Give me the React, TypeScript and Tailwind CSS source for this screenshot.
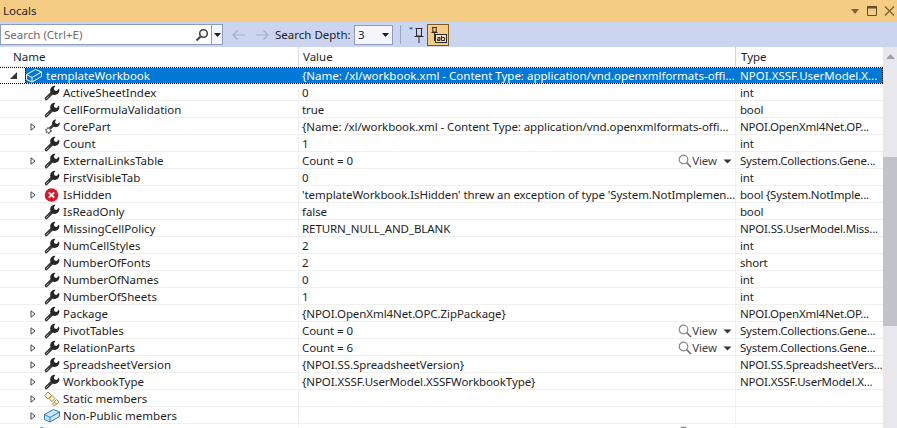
import React from 'react';

type Row = {
  name: string;
  value?: string;
  type?: string;
  icon?: 'wrench' | 'gear' | 'error' | 'static' | 'box';
  expand?: boolean;
  view?: boolean;
};

const rows: Row[] = [
  { name: 'ActiveSheetIndex', value: '0', type: 'int' },
  { name: 'CellFormulaValidation', value: 'true', type: 'bool' },
  { name: 'CorePart', value: '{Name: /xl/workbook.xml - Content Type: application/vnd.openxmlformats-offi...', type: 'NPOI.OpenXml4Net.OP...', icon: 'gear', expand: true },
  { name: 'Count', value: '1', type: 'int' },
  { name: 'ExternalLinksTable', value: 'Count = 0', type: 'System.Collections.Gene...', expand: true, view: true },
  { name: 'FirstVisibleTab', value: '0', type: 'int' },
  { name: 'IsHidden', value: "'templateWorkbook.IsHidden' threw an exception of type 'System.NotImplemen...", type: 'bool {System.NotImple...', icon: 'error', expand: true },
  { name: 'IsReadOnly', value: 'false', type: 'bool' },
  { name: 'MissingCellPolicy', value: 'RETURN_NULL_AND_BLANK', type: 'NPOI.SS.UserModel.Miss...' },
  { name: 'NumCellStyles', value: '2', type: 'int' },
  { name: 'NumberOfFonts', value: '2', type: 'short' },
  { name: 'NumberOfNames', value: '0', type: 'int' },
  { name: 'NumberOfSheets', value: '1', type: 'int' },
  { name: 'Package', value: '{NPOI.OpenXml4Net.OPC.ZipPackage}', type: 'NPOI.OpenXml4Net.OP...', expand: true },
  { name: 'PivotTables', value: 'Count = 0', type: 'System.Collections.Gene...', expand: true, view: true },
  { name: 'RelationParts', value: 'Count = 6', type: 'System.Collections.Gene...', expand: true, view: true },
  { name: 'SpreadsheetVersion', value: '{NPOI.SS.SpreadsheetVersion}', type: 'NPOI.SS.SpreadsheetVers...', expand: true },
  { name: 'WorkbookType', value: '{NPOI.XSSF.UserModel.XSSFWorkbookType}', type: 'NPOI.XSSF.UserModel.X...', expand: true },
  { name: 'Static members', icon: 'static', expand: true },
  { name: 'Non-Public members', icon: 'box', expand: true },
];

const Wrench = () => (
  <svg width="16" height="16" viewBox="0 0 16 16" className="shrink-0">
    <path d="M2.3 13.7 L8.5 7.5" stroke="#3a3a3a" strokeWidth="3.2" strokeLinecap="round" />
    <path d="M15 3.6 A4.6 4.6 0 1 1 11.4 0.8 L9.8 3.4 L10.6 5.5 L12.7 6.1 Z" fill="#262626" />
    <path d="M2.2 13.8 L4.6 11.4" stroke="#a8a8a8" strokeWidth="1" />
  </svg>
);

const GearWrench = () => (
  <svg width="16" height="16" viewBox="0 0 16 16" className="shrink-0">
    <path d="M6 9.5 L9.5 6" stroke="#3a3a3a" strokeWidth="2.6" strokeLinecap="round" />
    <path d="M15.5 3.2 A3.8 3.8 0 1 1 12.3 0.6 L10.9 2.8 L11.6 4.5 L13.4 5 Z" fill="#262626" />
    <circle cx="4.5" cy="11.5" r="2.4" fill="#ffffff" stroke="#555555" strokeWidth="1.8" strokeDasharray="1.6 0.6" />
  </svg>
);

const ErrorIcon = () => (
  <svg width="16" height="16" viewBox="0 0 16 16" className="shrink-0">
    <circle cx="7.5" cy="8" r="6.8" fill="#d5182a" />
    <path d="M4.8 5.3 L10.2 10.7 M10.2 5.3 L4.8 10.7" stroke="#ffffff" strokeWidth="1.8" />
  </svg>
);

const StaticIcon = () => (
  <svg width="16" height="16" viewBox="0 0 16 16" className="shrink-0" fill="#fff6dc" stroke="#a9812f" strokeWidth="1">
    <path d="M0.5 4.5 L4 1 L7.5 4.5 L4 8 Z" />
    <path d="M5 7.5 L8 4.5 L11 7.5 L8 10.5 Z" />
    <path d="M10 11 L12.5 8.5 L15 11 L12.5 13.5 Z" />
    <path d="M8.5 13 L10.5 11 L12.5 13 L10.5 15 Z" />
  </svg>
);

const BoxIcon = ({ white }: { white?: boolean }) => {
  const stroke = white ? '#ffffff' : '#1f7fc8';
  return (
    <svg width="16" height="16" viewBox="0 0 16 16" className="shrink-0" fill={white ? 'none' : '#cfe5f7'} stroke={stroke} strokeWidth="1">
      <path d="M0.5 6.5 L9.5 1.5 L15.5 4 L15.5 8.5 L6 14 L0.5 11.5 Z" />
      <path d="M0.5 6.5 L6 9.5 L15.5 4 M6 9.5 L6 14" fill="none" />
    </svg>
  );
};

const Expander = () => (
  <svg width="6" height="8" viewBox="0 0 6 8" className="shrink-0">
    <path d="M1 0.8 L5 4 L1 7.2 Z" fill="#ffffff" stroke="#444444" strokeWidth="1" />
  </svg>
);

const Chevron = () => (
  <svg width="9" height="5" viewBox="0 0 9 5" className="shrink-0">
    <path d="M0.5 0.5 H8.5 L4.5 4.5 Z" fill="#333333" />
  </svg>
);

const Magnifier = () => (
  <svg width="14" height="14" viewBox="0 0 14 14" className="shrink-0">
    <circle cx="5.5" cy="5.5" r="4.3" fill="none" stroke="#8a8a8a" strokeWidth="1.2" />
    <path d="M8.8 8.8 L13 13" stroke="#6a6a6a" strokeWidth="1.6" />
  </svg>
);

const ViewButton = () => (
  <div className="flex items-center text-[#3f3f46]">
    <Magnifier />
    <span className="mr-[6px]">View</span>
    <Chevron />
  </div>
);

const icons = {
  wrench: <Wrench />,
  gear: <GearWrench />,
  error: <ErrorIcon />,
  static: <StaticIcon />,
  box: <BoxIcon />,
};

const TreeRow = ({ row }: { row: Row }) => (
  <div className="flex h-[17px] border-b border-[#f0f0f0] leading-[16px] text-[#1e1e1e]">
    <div className="flex w-[299px] shrink-0 items-center border-r border-[#f0f0f0] pt-[2px]">
      <div className="flex w-[44px] shrink-0 justify-end pr-[8px] pl-[30px]">{row.expand && <Expander />}</div>
      <div className="flex w-[19px] shrink-0">{icons[row.icon ?? 'wrench']}</div>
      <span className="whitespace-nowrap">{row.name}</span>
    </div>
    <div className="flex w-[437px] shrink-0 items-center justify-between overflow-hidden whitespace-nowrap border-r border-[#f0f0f0] pt-[2px] pr-[3px] pl-[3px] tracking-[-0.08px]">
      <span>{row.value}</span>
      {row.view && <ViewButton />}
    </div>
    <div className="min-w-0 flex-1 overflow-hidden whitespace-nowrap pt-[1px] pl-[4px] tracking-[-0.2px]">{row.type}</div>
  </div>
);

const App = () => {
  return (
    <div className="flex h-[428px] w-[897px] flex-col overflow-hidden bg-white text-[11.5px] font-['Noto_Sans',sans-serif] text-[#1e1e1e]">
      {/* Title */}
      <div className="flex h-[22px] shrink-0 items-center justify-between bg-[#f5cc84] pr-[2px] pl-[3px]">
        <span className="text-[#1e1e1e]">Locals</span>
        <div className="flex items-center">
          <svg width="8" height="5" viewBox="0 0 8 5"><path d="M0 0 H8 L4 5 Z" fill="#7a6330" /></svg>
          <svg width="10" height="10" viewBox="0 0 10 10" className="ml-[8px]"><path d="M0.5 2 H9.5 V9.5 H0.5 Z" fill="none" stroke="#5f4d24" /><path d="M0 1 H10" stroke="#5f4d24" strokeWidth="2" /></svg>
          <svg width="11" height="10" viewBox="0 0 11 10" className="ml-[7px]"><path d="M1 0.5 L10 9.5 M10 0.5 L1 9.5" stroke="#7a6330" strokeWidth="1.4" /></svg>
        </div>
      </div>

      {/* Toolbar */}
      <div className="flex h-[25px] shrink-0 items-center bg-[#ccd5f0]">
        <div className="flex h-[21px] w-[223px] items-stretch border border-[#8e9bbc] bg-white">
          <div className="flex flex-1 items-center justify-between pr-[2px] pl-[3px]">
            <span className="text-[#6d6d6d]">Search (Ctrl+E)</span>
            <svg width="14" height="14" viewBox="0 0 14 14">
              <circle cx="8.5" cy="5.5" r="3.8" fill="none" stroke="#424242" strokeWidth="1.6" />
              <path d="M5.8 8.2 L1.5 12.5" stroke="#424242" strokeWidth="2" />
            </svg>
          </div>
          <div className="flex w-[11px] items-center justify-center border-l border-[#8e9bbc] bg-[#f5f6fd]">
            <svg width="7" height="4" viewBox="0 0 7 4"><path d="M0 0 H7 L3.5 4 Z" fill="#1e1e1e" /></svg>
          </div>
        </div>
        <svg width="16" height="12" viewBox="0 0 16 12" className="ml-[8px]"><path d="M14 6 H2 M6.5 1.5 L2 6 L6.5 10.5" fill="none" stroke="#a5aec8" strokeWidth="1.2" /></svg>
        <svg width="16" height="12" viewBox="0 0 16 12" className="ml-[7px]"><path d="M2 6 H14 M9.5 1.5 L14 6 L9.5 10.5" fill="none" stroke="#a5aec8" strokeWidth="1.2" /></svg>
        <span className="ml-[5px] w-[74px] whitespace-nowrap">Search Depth:</span>
        <div className="ml-[5px] flex h-[20px] w-[39px] items-center justify-between border border-[#8e9bbc] bg-[#f5f6fd] pr-[3px] pl-[3px]">
          <span>3</span>
          <svg width="7" height="4" viewBox="0 0 7 4"><path d="M0 0 H7 L3.5 4 Z" fill="#1e1e1e" /></svg>
        </div>
        <div className="ml-[7px] h-[19px] w-[1px] bg-[#9aa6c4]" />
        <svg width="18" height="18" viewBox="0 0 18 18" className="ml-[7px]">
          <path d="M1 1.5 H5 L3 4 Z" fill="#1f62b0" />
          <path d="M7.5 2.5 H14.5 M8.5 2.5 V10 H13.5 V2.5 M6.5 10.5 H15.5 M11 10.5 V17" fill="none" stroke="#2b2b2b" strokeWidth="1" />
        </svg>
        <div className="ml-[1px] flex h-[22px] w-[22px] items-center justify-center border border-[#7a5a1e] bg-[#f5cc84]">
          <svg width="18" height="18" viewBox="0 0 18 18">
            <path d="M3 1.5 H8 M3.8 1.5 V6 H7.2 V1.5 M2.5 6.5 H8.5 M5.5 6.5 V15" fill="none" stroke="#2b2b2b" strokeWidth="1" />
            <rect x="6.5" y="8.5" width="11" height="8" fill="#f9e4ba" stroke="#2b2b2b" strokeWidth="1" />
            <path d="M8.5 11.5 H11 V14.5 H8.5 V13 H11 M12.5 9.8 V14.5 H15.5 V11.5 H12.5" fill="none" stroke="#2b2b2b" strokeWidth="1" />
          </svg>
        </div>
      </div>

      {/* Grid */}
      <div className="flex min-h-0 flex-1">
        <div className="min-w-0 flex-1 overflow-hidden">
          <div className="flex h-[20px] border-b border-[#f0f0f0] leading-[20px]">
            <div className="w-[299px] shrink-0 border-r border-[#d5d9ea] pl-[13px]">Name</div>
            <div className="w-[437px] shrink-0 border-r border-[#ccd5f0] pl-[4px]">Value</div>
            <div className="flex-1 pl-[5px]">Type</div>
          </div>
          <div className="flex h-[17px] border-y border-dotted border-black leading-[15px]">
            <div className="flex w-[25px] shrink-0 items-center justify-end pr-[8px]">
              <svg width="7" height="7" viewBox="0 0 7 7" className="shrink-0"><path d="M7 0 V7 H0 Z" fill="#333333" /></svg>
            </div>
            <div className="flex min-w-0 flex-1 items-center border-x border-dotted border-black bg-[#0078d7] text-white">
              <div className="flex w-[273px] shrink-0 items-center">
                <BoxIcon white />
                <span className="ml-[4px] whitespace-nowrap">templateWorkbook</span>
              </div>
              <span className="w-[437px] shrink-0 overflow-hidden whitespace-nowrap pl-[3px]">
                {'{Name: /xl/workbook.xml - Content Type: application/vnd.openxmlformats-offi...'}
              </span>
              <span className="min-w-0 flex-1 overflow-hidden whitespace-nowrap pl-[4px]">NPOI.XSSF.UserModel.X...</span>
            </div>
          </div>
          {rows.map((row) => (
            <TreeRow key={row.name} row={row} />
          ))}
          {/* next row, cut off by the window */}
          <div className="flex h-[17px] pt-[2px]">
            <div className="w-[299px] shrink-0 border-r border-[#f0f0f0] pl-[32px]"><BoxIcon /></div>
            <div className="flex w-[437px] shrink-0 justify-end border-r border-[#f0f0f0] pr-[43px]"><Magnifier /></div>
          </div>
        </div>

        {/* Scrollbar */}
        <div className="flex w-[14px] shrink-0 flex-col items-center bg-[#e8e8ec]">
          <svg width="9" height="5" viewBox="0 0 9 5" className="mt-[7px]"><path d="M0 5 L4.5 0 L9 5 Z" fill="#a0a0a8" /></svg>
          <div className="mt-[98px] h-[169px] w-[14px] bg-[#c2c3c9]" />
        </div>
      </div>
    </div>
  );
};

export default App;
